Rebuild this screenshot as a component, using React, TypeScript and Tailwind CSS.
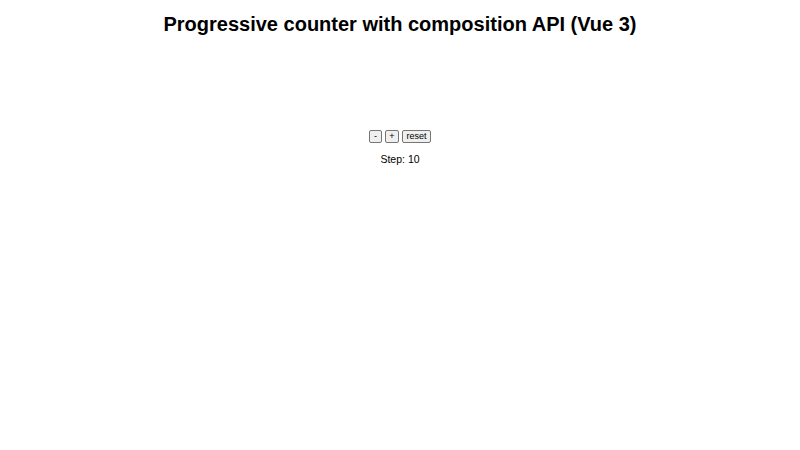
import React, { useState } from 'react';

const btn =
  'h-[13px] border border-[#767676] bg-[#efefef] rounded-[2px] text-[9px] leading-none text-black flex items-center justify-center';

const App: React.FC = () => {
  const [count, setCount] = useState(0);
  const step = 10;

  return (
    <div className="min-h-[450px] w-full bg-white text-black text-center font-['Liberation_Sans',Arial,sans-serif]">
      <h1 className="pt-[13px] text-[20px] leading-[23px] font-bold">
        Progressive counter with composition API (Vue 3)
      </h1>
      <div className="mt-[94px] flex justify-center gap-[3px]">
        <button className={`${btn} w-[13px]`} onClick={() => setCount(count - step)}>
          -
        </button>
        <button className={`${btn} w-[14px]`} onClick={() => setCount(count + step)}>
          +
        </button>
        <button className={`${btn} w-[29px]`} onClick={() => setCount(0)}>
          reset
        </button>
      </div>
      <p className="mt-[10px] text-[10.5px] leading-[12px]">Step: {step}</p>
    </div>
  );
};

export default App;
